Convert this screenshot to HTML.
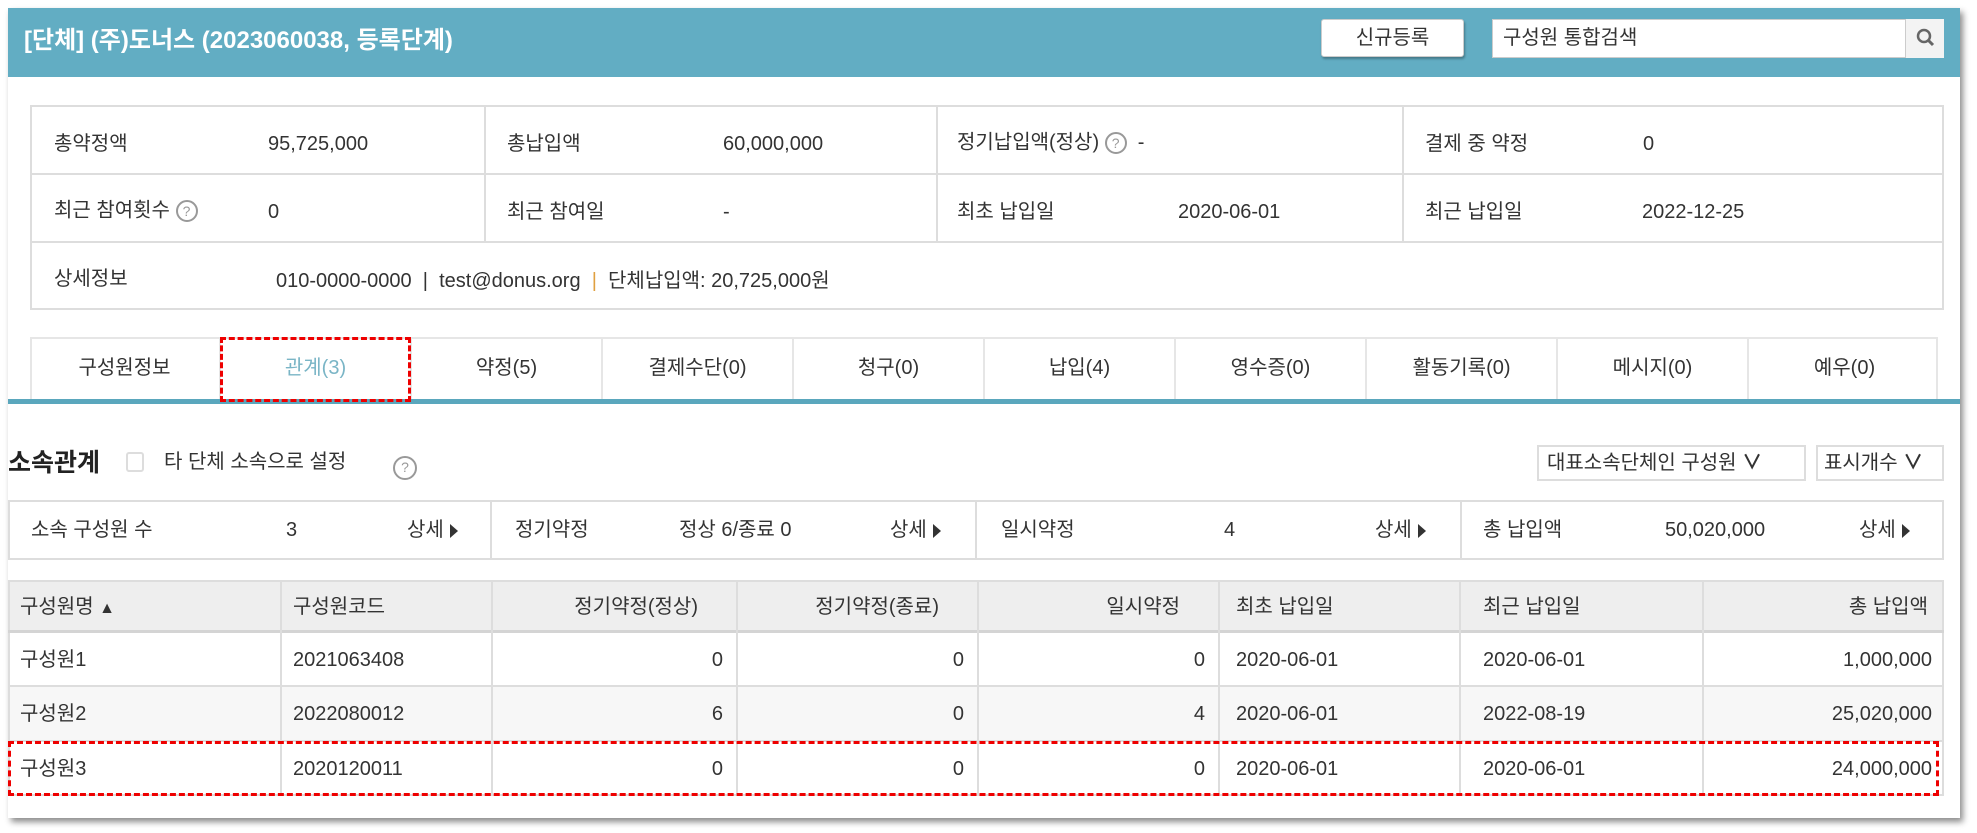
<!DOCTYPE html>
<html><head><meta charset="utf-8"><style>
*{margin:0;padding:0;box-sizing:border-box}
body{width:1977px;height:833px;background:#fff;font-family:"Liberation Sans","Noto Sans CJK KR",sans-serif;color:#333;font-size:20px;position:relative;overflow:hidden}
.a{position:absolute}
.panel{left:8px;top:8px;width:1952px;height:810px;background:#fff;box-shadow:3px 4px 6px rgba(0,0,0,.45)}
.hdr{left:8px;top:8px;width:1952px;height:69px;background:#62adc3}
.t{position:absolute;white-space:nowrap;line-height:1}
.box{position:absolute;border:2px solid #ddd}
.vl{position:absolute;width:2px;background:#ddd}
.hl{position:absolute;height:2px;background:#ddd}
.q{display:inline-block;width:22px;height:22px;border:2px solid #999;border-radius:50%;color:#999;font-size:14px;text-align:center;line-height:18px;vertical-align:middle}
.tab{position:absolute;top:337px;height:62px;width:191px;text-align:center;line-height:62px;border-right:2px solid #e6e6e6;font-size:20px}
.tri{display:inline-block;width:0;height:0;border-top:7px solid transparent;border-bottom:7px solid transparent;border-left:8px solid #333;margin-left:6px;vertical-align:middle}
.cell{position:absolute;line-height:1;white-space:nowrap;font-size:20px}
</style></head><body>
<div class="a panel"></div>
<div class="a hdr"></div>
<div class="t" style="left:24px;top:29px;color:#fff;font-size:24px;font-weight:bold">[단체] (주)도너스 (2023060038, 등록단계)</div>
<div class="a" style="left:1321px;top:19px;width:143px;height:38px;background:#fff;border:1px solid #ccc;border-radius:3px;box-shadow:1px 2px 2px rgba(0,0,0,.3);text-align:center;line-height:36px;font-size:20px">신규등록</div>
<div class="a" style="left:1492px;top:19px;width:452px;height:39px;background:#fff;border:1px solid #ccc"></div>
<div class="t" style="left:1503px;top:28px">구성원 통합검색</div>
<div class="a" style="left:1905px;top:19px;width:39px;height:39px;border-left:1px solid #ccc;background:#f3f3f3"><svg width="39" height="39"><circle cx="18" cy="17" r="6" fill="none" stroke="#666" stroke-width="2.5"/><line x1="22" y1="21" x2="27" y2="26" stroke="#666" stroke-width="3"/></svg></div>

<div class="box" style="left:30px;top:105px;width:1914px;height:205px"></div>
<div class="hl" style="left:30px;top:173px;width:1914px"></div>
<div class="hl" style="left:30px;top:241px;width:1914px"></div>
<div class="vl" style="left:484px;top:105px;height:137px"></div>
<div class="vl" style="left:936px;top:105px;height:137px"></div>
<div class="vl" style="left:1402px;top:105px;height:137px"></div>
<div class="t" style="left:54px;top:134px">총약정액</div><div class="t" style="left:268px;top:134px">95,725,000</div>
<div class="t" style="left:507px;top:134px">총납입액</div><div class="t" style="left:723px;top:134px">60,000,000</div>
<div class="t" style="left:957px;top:132px">정기납입액(정상) <span class="q">?</span>&nbsp; -</div>
<div class="t" style="left:1425px;top:134px">결제 중 약정</div><div class="t" style="left:1643px;top:134px">0</div>
<div class="t" style="left:54px;top:200px">최근 참여횟수 <span class="q">?</span></div><div class="t" style="left:268px;top:202px">0</div>
<div class="t" style="left:507px;top:202px">최근 참여일</div><div class="t" style="left:723px;top:202px">-</div>
<div class="t" style="left:957px;top:202px">최초 납입일</div><div class="t" style="left:1178px;top:202px">2020-06-01</div>
<div class="t" style="left:1425px;top:202px">최근 납입일</div><div class="t" style="left:1642px;top:202px">2022-12-25</div>
<div class="t" style="left:54px;top:269px">상세정보</div>
<div class="t" style="left:276px;top:271px">010-0000-0000 &nbsp;| &nbsp;test@donus.org &nbsp;<span style="color:#e0a040">|</span> &nbsp;단체납입액: 20,725,000원</div>

<div class="a" style="left:30px;top:337px;width:1908px;height:62px;border:2px solid #e6e6e6;border-bottom:none"></div>
<div class="tab" style="left:30px">구성원정보</div>
<div class="tab" style="left:221px;color:#7ab5c6">관계(3)</div>
<div class="tab" style="left:412px">약정(5)</div>
<div class="tab" style="left:603px">결제수단(0)</div>
<div class="tab" style="left:794px">청구(0)</div>
<div class="tab" style="left:985px">납입(4)</div>
<div class="tab" style="left:1176px">영수증(0)</div>
<div class="tab" style="left:1367px">활동기록(0)</div>
<div class="tab" style="left:1558px">메시지(0)</div>
<div class="tab" style="left:1749px;border-right:none">예우(0)</div>
<div class="a" style="left:8px;top:399px;width:1952px;height:5px;background:#5aa7bd"></div>
<div class="a" style="left:220px;top:337px;width:191px;height:65px;border:3px dashed #e00"></div>

<div class="t" style="left:8px;top:451px;font-size:25px;font-weight:bold;color:#222">소속관계</div>
<div class="a" style="left:126px;top:452px;width:18px;height:20px;border:2px solid #ddd;border-radius:3px"></div>
<div class="t" style="left:164px;top:452px">타 단체 소속으로 설정</div>
<span class="q a" style="left:393px;top:456px;width:24px;height:24px">?</span>
<div class="a" style="left:1537px;top:445px;width:269px;height:36px;border:2px solid #ddd;line-height:32px;padding-left:8px">대표소속단체인 구성원 <b>&#x2228;</b></div>
<div class="a" style="left:1816px;top:445px;width:128px;height:36px;border:2px solid #ddd;line-height:32px;padding-left:6px">표시개수 <b>&#x2228;</b></div>

<div class="box" style="left:8px;top:500px;width:1936px;height:60px"></div>
<div class="vl" style="left:490px;top:500px;height:60px"></div>
<div class="vl" style="left:975px;top:500px;height:60px"></div>
<div class="vl" style="left:1460px;top:500px;height:60px"></div>
<div class="t" style="left:31px;top:520px">소속 구성원 수</div><div class="t" style="left:286px;top:520px">3</div><div class="t" style="left:407px;top:520px">상세<span class="tri"></span></div>
<div class="t" style="left:515px;top:520px">정기약정</div><div class="t" style="left:679px;top:520px">정상 6/종료 0</div><div class="t" style="left:890px;top:520px">상세<span class="tri"></span></div>
<div class="t" style="left:1001px;top:520px">일시약정</div><div class="t" style="left:1224px;top:520px">4</div><div class="t" style="left:1375px;top:520px">상세<span class="tri"></span></div>
<div class="t" style="left:1483px;top:520px">총 납입액</div><div class="t" style="left:1665px;top:520px">50,020,000</div><div class="t" style="left:1859px;top:520px">상세<span class="tri"></span></div>

<div class="a" style="left:8px;top:580px;width:1936px;height:51px;background:#eee;border-radius:4px 4px 0 0"></div>
<div class="a" style="left:8px;top:686px;width:1936px;height:55px;background:#f7f7f7"></div>
<div class="box" style="left:8px;top:580px;width:1936px;height:216px;border-color:#ddd"></div>
<div class="a" style="left:8px;top:630px;width:1936px;height:3px;background:#d4d4d4"></div>
<div class="hl" style="left:8px;top:685px;width:1936px"></div>
<div class="hl" style="left:8px;top:740px;width:1936px"></div>
<div class="vl" style="left:280px;top:580px;height:216px"></div>
<div class="vl" style="left:491px;top:580px;height:216px"></div>
<div class="vl" style="left:736px;top:580px;height:216px"></div>
<div class="vl" style="left:977px;top:580px;height:216px"></div>
<div class="vl" style="left:1218px;top:580px;height:216px"></div>
<div class="vl" style="left:1459px;top:580px;height:216px"></div>
<div class="vl" style="left:1702px;top:580px;height:216px"></div>

<div class="cell" style="left:20px;top:597px">구성원명 <span style="font-size:16px">▲</span></div>
<div class="cell" style="left:293px;top:597px">구성원코드</div>
<div class="cell" style="right:1279px;top:597px">정기약정(정상)</div>
<div class="cell" style="right:1038px;top:597px">정기약정(종료)</div>
<div class="cell" style="right:797px;top:597px">일시약정</div>
<div class="cell" style="left:1236px;top:597px">최초 납입일</div>
<div class="cell" style="left:1483px;top:597px">최근 납입일</div>
<div class="cell" style="right:49px;top:597px">총 납입액</div>

<div class="cell" style="left:20px;top:650px">구성원1</div><div class="cell" style="left:293px;top:650px">2021063408</div><div class="cell" style="right:1254px;top:650px">0</div><div class="cell" style="right:1013px;top:650px">0</div><div class="cell" style="right:772px;top:650px">0</div><div class="cell" style="left:1236px;top:650px">2020-06-01</div><div class="cell" style="left:1483px;top:650px">2020-06-01</div><div class="cell" style="right:45px;top:650px">1,000,000</div>
<div class="cell" style="left:20px;top:704px">구성원2</div><div class="cell" style="left:293px;top:704px">2022080012</div><div class="cell" style="right:1254px;top:704px">6</div><div class="cell" style="right:1013px;top:704px">0</div><div class="cell" style="right:772px;top:704px">4</div><div class="cell" style="left:1236px;top:704px">2020-06-01</div><div class="cell" style="left:1483px;top:704px">2022-08-19</div><div class="cell" style="right:45px;top:704px">25,020,000</div>
<div class="cell" style="left:20px;top:759px">구성원3</div><div class="cell" style="left:293px;top:759px">2020120011</div><div class="cell" style="right:1254px;top:759px">0</div><div class="cell" style="right:1013px;top:759px">0</div><div class="cell" style="right:772px;top:759px">0</div><div class="cell" style="left:1236px;top:759px">2020-06-01</div><div class="cell" style="left:1483px;top:759px">2020-06-01</div><div class="cell" style="right:45px;top:759px">24,000,000</div>
<div class="a" style="left:8px;top:741px;width:1931px;height:55px;border:3px dashed #e00"></div>
</body></html>
